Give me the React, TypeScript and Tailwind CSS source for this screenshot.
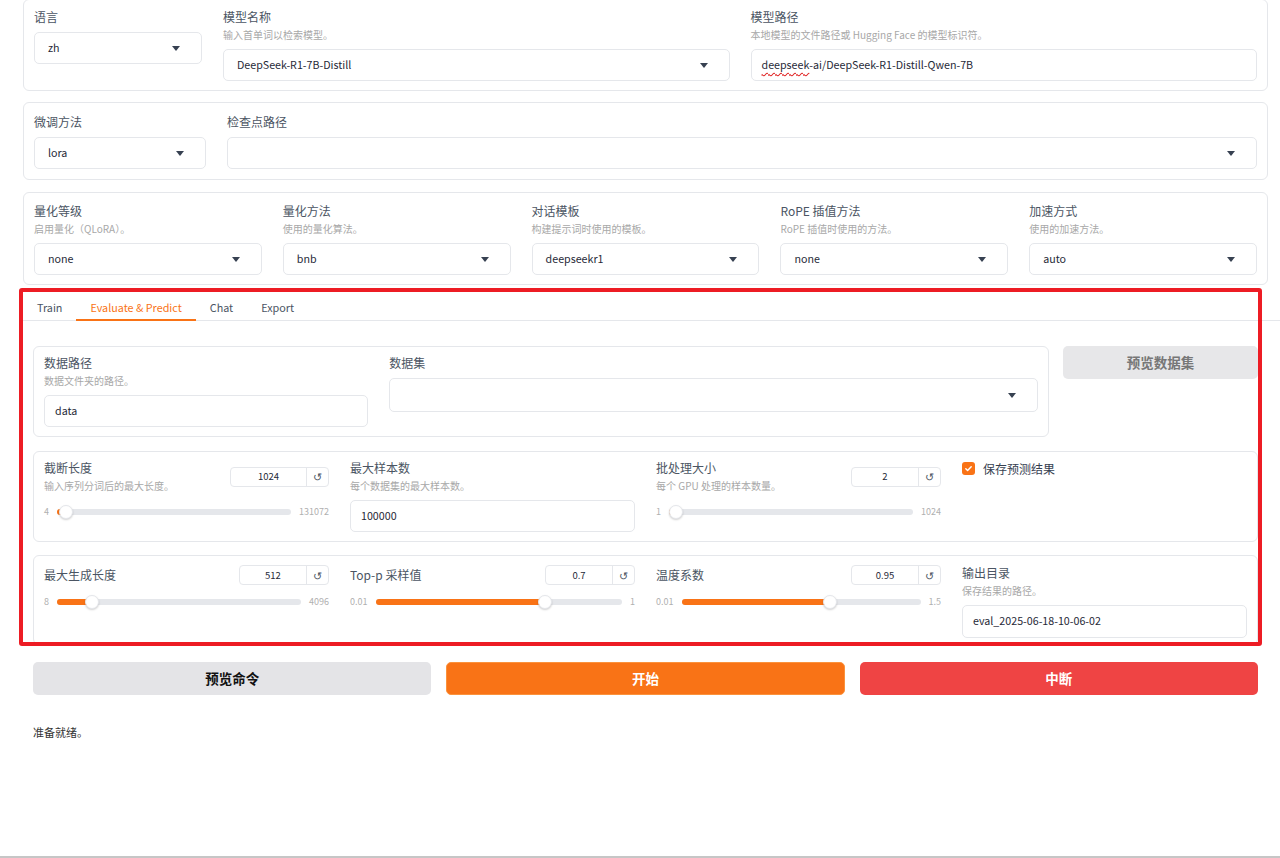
import React from "react";

/**
 * Gradio-style "Evaluate & Predict" panel: model settings blocks on top,
 * the tab strip, dataset / generation params, action buttons, status line.
 */

function Label({ children }: { children: React.ReactNode }) {
  return <div className="text-[12px] leading-[16px] text-[#4b5563]">{children}</div>;
}

function Info({ children }: { children: React.ReactNode }) {
  return <div className="mt-[3px] text-[10px] leading-[14px] text-[#a8a8a8]">{children}</div>;
}

function Caret() {
  return (
    <svg width="8" height="5" viewBox="0 0 8 5" className="flex-none">
      <path d="M0 0h8L4 5z" fill="#374151" />
    </svg>
  );
}

function Dropdown({ value, h = "h-[32px]" }: { value?: string; h?: string }) {
  return (
    <div
      className={`mt-[7px] flex ${h} items-center justify-between rounded-[5px] border border-[#e5e7eb] bg-white pl-[13px] pr-[21px] text-[10.7px] text-[#1f2937]`}
    >
      <span>{value}</span>
      <Caret />
    </div>
  );
}

function TextBox({ children, h = "h-[32px]" }: { children: React.ReactNode; h?: string }) {
  return (
    <div
      className={`mt-[7px] flex ${h} items-center rounded-[5px] border border-[#e5e7eb] bg-white px-[10px] text-[10.7px] text-[#1f2937]`}
    >
      {children}
    </div>
  );
}

function NumBox({ value, w }: { value: string; w: string }) {
  return (
    <div className="flex h-[20px] flex-none items-stretch rounded-[4px] border border-[#e5e7eb] bg-white">
      <div className={`${w} flex items-center justify-center text-[9.5px] text-[#1f2937]`}>{value}</div>
      <div className="flex w-[22px] items-center justify-center border-l border-[#e5e7eb] text-[11px] text-[#4b5563]">
        ↺
      </div>
    </div>
  );
}

interface SliderProps {
  label: string;
  info?: string;
  min: number;
  max: number;
  value: number;
  shown: string;
  numW: string;
}

function Slider({ label, info, min, max, value, shown, numW }: SliderProps) {
  const frac = (value - min) / (max - min);
  return (
    <div>
      <div className="flex items-center justify-between">
        <div>
          <Label>{label}</Label>
          {info && <Info>{info}</Info>}
        </div>
        <NumBox value={shown} w={numW} />
      </div>
      <div className={`${info ? "mt-[12px]" : "mt-[10px]"} flex items-center gap-[8px]`}>
        <span className="text-[9px] leading-[14px] text-[#b0b0b0]">{min}</span>
        <div className="relative h-[14px] flex-1">
          <div className="absolute inset-x-0 top-[4px] h-[6px] rounded-full bg-[#e5e7eb]" />
          <div
            className="absolute left-0 top-[4px] h-[6px] rounded-full bg-[#f97316]"
            style={{ width: `calc(7px + ${frac} * (100% - 14px))` }}
          />
          <div
            className="absolute top-0 h-[14px] w-[14px] rounded-full border border-[#e5e7eb] bg-white shadow-[0_1px_2px_rgba(0,0,0,0.18)]"
            style={{ left: `calc(${frac} * (100% - 14px))` }}
          />
        </div>
        <span className="text-[9px] leading-[14px] text-[#b0b0b0]">{max}</span>
      </div>
    </div>
  );
}

const TABS = ["Train", "Evaluate & Predict", "Chat", "Export"];

export default function App() {
  return (
    <div className="relative h-[858px] overflow-hidden border-b-2 border-[#c6c6c6] bg-white font-['Noto_Sans_CJK_SC','Noto_Sans',sans-serif]">
      <div className="pl-[23px] pr-[12px]">
        {/* Model */}
        <div className="-mt-px grid grid-cols-[168px_1fr_1fr] gap-x-[21px] rounded-[6px] border border-[#e5e7eb] px-[10px] pt-[9px] pb-[9px]">
          <div>
            <Label>语言</Label>
            <Dropdown value="zh" />
          </div>
          <div>
            <Label>模型名称</Label>
            <Info>输入首单词以检索模型。</Info>
            <Dropdown value="DeepSeek-R1-7B-Distill" />
          </div>
          <div>
            <Label>模型路径</Label>
            <Info>本地模型的文件路径或 Hugging Face 的模型标识符。</Info>
            <TextBox>
              <span className="underline decoration-[#e02424] decoration-wavy underline-offset-[3px]">deepseek</span>
              -ai/DeepSeek-R1-Distill-Qwen-7B
            </TextBox>
          </div>
        </div>

        {/* Finetuning */}
        <div className="mt-[11px] grid grid-cols-[172px_1fr] gap-x-[21px] rounded-[6px] border border-[#e5e7eb] px-[10px] pt-[11px] pb-[10px]">
          <div>
            <Label>微调方法</Label>
            <Dropdown value="lora" />
          </div>
          <div>
            <Label>检查点路径</Label>
            <Dropdown />
          </div>
        </div>

        {/* Advanced */}
        <div className="mt-[12px] grid grid-cols-5 gap-x-[21px] rounded-[6px] border border-[#e5e7eb] px-[10px] pt-[10px] pb-[9px]">
          <div>
            <Label>量化等级</Label>
            <Info>启用量化（QLoRA）。</Info>
            <Dropdown value="none" />
          </div>
          <div>
            <Label>量化方法</Label>
            <Info>使用的量化算法。</Info>
            <Dropdown value="bnb" />
          </div>
          <div>
            <Label>对话模板</Label>
            <Info>构建提示词时使用的模板。</Info>
            <Dropdown value="deepseekr1" />
          </div>
          <div>
            <Label>RoPE 插值方法</Label>
            <Info>RoPE 插值时使用的方法。</Info>
            <Dropdown value="none" />
          </div>
          <div>
            <Label>加速方式</Label>
            <Info>使用的加速方法。</Info>
            <Dropdown value="auto" />
          </div>
        </div>

        {/* Tabs */}
        <div className="-mr-[12px] mt-[10px] flex h-[26px] border-b border-[#e5e7eb]">
          {TABS.map((t) => (
            <div
              key={t}
              className={
                t === "Evaluate & Predict"
                  ? "-mb-px flex items-center border-b-2 border-[#f97316] px-[14px] pt-[1px] text-[10.8px] text-[#f97316]"
                  : "flex items-center px-[14px] text-[10.8px] text-[#4b5563]"
              }
            >
              {t}
            </div>
          ))}
        </div>

        <div className="px-[10px] pt-[25px]">
          {/* Dataset row */}
          <div className="flex gap-[14px]">
            <div className="grid flex-1 grid-cols-[1fr_2fr] gap-x-[21px] rounded-[6px] border border-[#e5e7eb] px-[10px] pt-[8px] pb-[9px]">
              <div>
                <Label>数据路径</Label>
                <Info>数据文件夹的路径。</Info>
                <TextBox>data</TextBox>
              </div>
              <div>
                <Label>数据集</Label>
                <Dropdown h="h-[34px]" />
              </div>
            </div>
            <div className="flex h-[33px] w-[195px] items-center justify-center rounded-[5px] bg-[#e7e7e9] text-[13.5px] font-bold text-[#777]">
              预览数据集
            </div>
          </div>

          {/* Length / samples / batch */}
          <div className="mt-[14px] grid grid-cols-4 gap-x-[21px] rounded-[6px] border border-[#e5e7eb] px-[10px] pt-[8px] pb-[9px]">
            <Slider
              label="截断长度"
              info="输入序列分词后的最大长度。"
              min={4}
              max={131072}
              value={1024}
              shown="1024"
              numW="w-[75px]"
            />
            <div>
              <Label>最大样本数</Label>
              <Info>每个数据集的最大样本数。</Info>
              <TextBox>100000</TextBox>
            </div>
            <Slider
              label="批处理大小"
              info="每个 GPU 处理的样本数量。"
              min={1}
              max={1024}
              value={2}
              shown="2"
              numW="w-[66px]"
            />
            <div className="flex items-start gap-[8px] pt-[1px]">
              <div className="mt-[1px] flex h-[13px] w-[13px] items-center justify-center rounded-[3px] bg-[#f97316]">
                <svg width="9" height="9" viewBox="0 0 10 10">
                  <path d="M2 5.2l2 2L8 3" fill="none" stroke="#fff" strokeWidth="1.6" strokeLinecap="round" strokeLinejoin="round" />
                </svg>
              </div>
              <span className="text-[12px] leading-[16px] text-[#374151]">保存预测结果</span>
            </div>
          </div>

          {/* Generation */}
          <div className="mt-[13px] grid grid-cols-4 gap-x-[21px] rounded-[6px] border border-[#e5e7eb] px-[10px] pt-[9px] pb-[6px]">
            <Slider label="最大生成长度" min={8} max={4096} value={512} shown="512" numW="w-[66px]" />
            <Slider label="Top-p 采样值" min={0.01} max={1} value={0.7} shown="0.7" numW="w-[66px]" />
            <Slider label="温度系数" min={0.01} max={1.5} value={0.95} shown="0.95" numW="w-[66px]" />
            <div>
              <Label>输出目录</Label>
              <Info>保存结果的路径。</Info>
              <TextBox h="h-[33px]">eval_2025-06-18-10-06-02</TextBox>
            </div>
          </div>

          {/* Actions */}
          <div className="mt-[17px] grid grid-cols-3 gap-x-[15px]">
            <div className="flex h-[33px] items-center justify-center rounded-[5px] bg-[#e4e4e7] text-[13.5px] font-bold text-[#111]">
              预览命令
            </div>
            <div className="flex h-[33px] items-center justify-center rounded-[5px] border border-[#fb923c] bg-[#f97316] text-[13.5px] font-bold text-white">
              开始
            </div>
            <div className="flex h-[33px] items-center justify-center rounded-[5px] bg-[#ef4444] text-[13.5px] font-bold text-white">
              中断
            </div>
          </div>

          <div className="mt-[30px] text-[11px] leading-[14px] text-[#333]">准备就绪。</div>
        </div>
      </div>

      {/* red annotation frame */}
      <div className="pointer-events-none absolute left-[19px] top-[288px] h-[358px] w-[1243px] rounded-[3px] border-[4px] border-[#ed1c24]" />
    </div>
  );
}
